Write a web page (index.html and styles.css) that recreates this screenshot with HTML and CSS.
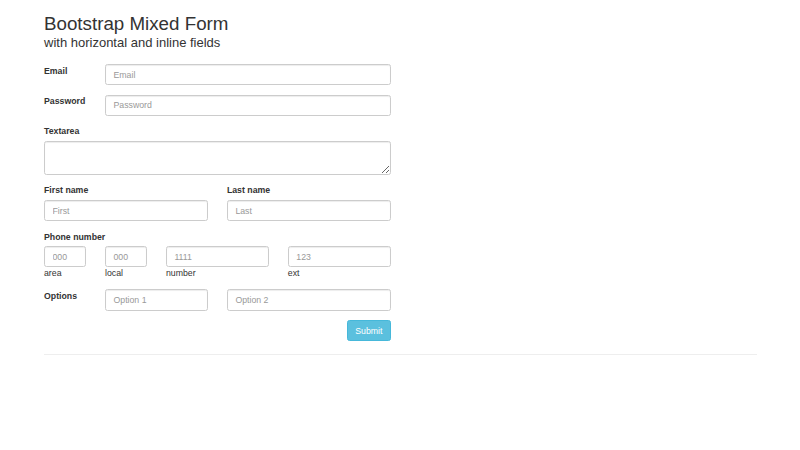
FILE: index.html
```html
<!DOCTYPE html>
<html lang="en">
    <head>
        <meta charset="UTF-8" />
        <meta name="viewport" content="width=device-width, initial-scale=1.0" />
        <title>Bootstrap Mixed Form</title>
        <link rel="stylesheet" href="styles.css">
    </head>
    <body>
        <div class="container">
            <h2 class="page-title">Bootstrap Mixed Form</h2>
            <h4 class="page-subtitle">with horizontal and inline fields</h4>

            <form class="mixed-form" onsubmit="return false;">
                <div class="form-row">
                    <label class="inline-label" for="email">Email</label>
                    <input class="field span-5" id="email" type="email" placeholder="Email" />
                </div>
                <div class="form-row">
                    <label class="inline-label" for="password">Password</label>
                    <input class="field span-5" id="password" type="password" placeholder="Password" />
                </div>
                <div class="form-group">
                    <label class="stacked-label" for="textarea">Textarea</label>
                    <textarea class="field area-field" id="textarea"></textarea>
                </div>
                <div class="form-row">
                    <div class="span-3">
                        <label class="stacked-label" for="first">First name</label>
                        <input class="field" id="first" type="text" placeholder="First" />
                    </div>
                    <div class="span-3">
                        <label class="stacked-label" for="last">Last name</label>
                        <input class="field" id="last" type="text" placeholder="Last" />
                    </div>
                </div>
                <div class="form-group">
                    <label class="stacked-label">Phone number</label>
                    <div class="phone-row">
                        <div class="span-1">
                            <input class="field" type="text" placeholder="000" />
                            <span class="sub-label">area</span>
                        </div>
                        <div class="span-1">
                            <input class="field" type="text" placeholder="000" />
                            <span class="sub-label">local</span>
                        </div>
                        <div class="span-2">
                            <input class="field" type="text" placeholder="1111" />
                            <span class="sub-label">number</span>
                        </div>
                        <div class="span-2">
                            <input class="field" type="text" placeholder="123" />
                            <span class="sub-label">ext</span>
                        </div>
                    </div>
                </div>
                <div class="form-row">
                    <label class="inline-label">Options</label>
                    <input class="field span-2" type="text" placeholder="Option 1" />
                    <input class="field span-3" type="text" placeholder="Option 2" />
                </div>
                <div class="form-actions">
                    <button class="btn-submit" type="submit">Submit</button>
                </div>
            </form>

            <hr class="divider" />
        </div>
    </body>
</html>
```

FILE: styles.css
```css
body {
    margin: 0;
    font-family: "Liberation Sans", Arial, sans-serif;
    font-size: 8.75px;
    line-height: 12.5px;
    color: #333333;
    background-color: #ffffff;
}

.container {
    padding: 0 43px 0 44px;
}

.page-title {
    margin: 13.5px 0 0;
    font-size: 18.75px;
    font-weight: 400;
    line-height: 1.1;
}

.page-subtitle {
    margin: 2px 0 0;
    font-size: 13px;
    font-weight: 400;
    line-height: 1.1;
}

.mixed-form {
    width: 347px;
    margin-top: 13.6px;
}

.form-row,
.phone-row {
    display: grid;
    grid-template-columns: repeat(6, 1fr);
    column-gap: 18.75px;
}

.form-row,
.form-group {
    margin-bottom: 9.4px;
}

.span-1 { grid-column: span 1; }
.span-2 { grid-column: span 2; }
.span-3 { grid-column: span 3; }
.span-5 { grid-column: span 5; }

.inline-label,
.stacked-label {
    font-weight: 700;
    line-height: 12.5px;
}

.inline-label {
    padding-top: 0.5px;
}

.stacked-label {
    display: block;
    margin-bottom: 3.1px;
}

.field {
    display: block;
    box-sizing: border-box;
    width: 100%;
    height: 21.25px;
    padding: 0 7.5px;
    font-family: inherit;
    font-size: 8.75px;
    color: #555555;
    background-color: #ffffff;
    border: 1px solid #cccccc;
    border-radius: 2.5px;
    box-shadow: inset 0 1px 1px rgba(0, 0, 0, 0.075);
}

.field::placeholder {
    color: #999999;
}

.area-field {
    height: 34px;
    padding: 4px 7.5px;
    resize: vertical;
}

.sub-label {
    display: block;
    line-height: 12.5px;
}

.form-actions {
    display: flex;
    justify-content: flex-end;
}

.btn-submit {
    height: 21.25px;
    padding: 0 7.5px;
    font-family: inherit;
    font-size: 8.75px;
    color: #ffffff;
    background-color: #5bc0de;
    border: 1px solid #46b8da;
    border-radius: 2.5px;
}

.divider {
    margin: 12.5px 0 0;
    border: 0;
    border-top: 1px solid #eeeeee;
}
```
